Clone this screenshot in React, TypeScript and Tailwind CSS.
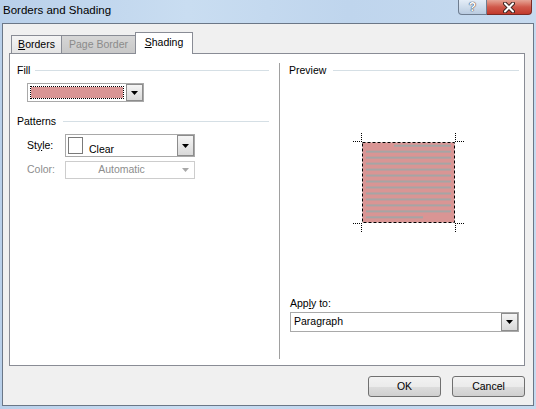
import React from "react";

function Arrow({ color = "#000" }: { color?: string }) {
  return (
    <svg width="7" height="4" viewBox="0 0 7 4">
      <path d="M0 0h7L3.5 4z" fill={color} />
    </svg>
  );
}

function DropButton({ className = "" }: { className?: string }) {
  return (
    <div className={"flex items-center justify-center border border-[#8c8c8c] bg-gradient-to-b from-[#f5f5f5] to-[#d9d9d9] " + className}>
      <Arrow />
    </div>
  );
}

function GroupHeader({ label, gap }: { label: string; gap: string }) {
  return (
    <div className="flex h-[14px] items-center">
      <span className="leading-none">{label}</span>
      <div className={"h-px flex-1 bg-[#d5dfe5] " + gap} />
    </div>
  );
}

function Preview() {
  const lines = Array.from({ length: 13 }, (_, i) => i);
  return (
    <svg width="116" height="106" viewBox="0 0 116 106" className="ml-[61px] mt-[53px]">
      <rect x="12.5" y="12.5" width="92" height="80" fill="#d99594" />
      {lines.map((i) => {
        const x1 = i === 0 ? 44 : 16;
        const x2 = i === 12 ? 73 : 101;
        return <rect key={i} x={x1} y={14.7 + i * 5.97} width={x2 - x1} height="2" fill="#a5a5a5" />;
      })}
      <rect x="12.5" y="12.5" width="92" height="80" fill="none" stroke="#000" strokeDasharray="3 2" />
      <g stroke="#000" strokeDasharray="1 1" fill="none">
        <path d="M11.5 3v9M3 11.5h9" />
        <path d="M105.5 3v9M105 11.5h9" />
        <path d="M11.5 93v9M3 93.5h9" />
        <path d="M105.5 93v9M105 93.5h9" />
      </g>
    </svg>
  );
}

export default function App() {
  return (
    <div className="flex h-[409px] w-[536px] flex-col bg-[linear-gradient(90deg,#b9d0ea_0%,#c9ddf1_35%,#bfd5ed_65%,#c6daef_100%)] px-[2px] pb-[3px] font-['Liberation_Sans',Arial,sans-serif] text-[10.5px] text-black">
      {/* title bar */}
      <div className="flex h-[23px] items-start">
        <div className="ml-px mt-[3px] flex-1 text-[11.5px] leading-[14px] text-black">Borders and Shading</div>
        <div className="mr-[2px] flex h-[15px]">
          <div className="flex w-[29px] items-center justify-center rounded-bl-[4px] border border-t-0 border-[#6e7d90] bg-gradient-to-b from-[#e4edf7] to-[#b9cbe0]">
            <span className="text-[12px] font-bold leading-none text-white [text-shadow:0_0_1px_#223,0_0_1px_#223]">?</span>
          </div>
          <div className="flex w-[45px] items-center justify-center rounded-br-[4px] border border-l-0 border-t-0 border-[#7b2a24] bg-gradient-to-b from-[#e5a496] via-[#d0594b] to-[#c1392c]">
            <svg width="12" height="11" viewBox="0 0 12 11">
              <path d="M2 1.5l8 8M10 1.5l-8 8" stroke="#3b2420" strokeWidth="4" strokeLinecap="round" />
              <path d="M2 1.5l8 8M10 1.5l-8 8" stroke="#fff" strokeWidth="2" strokeLinecap="round" />
            </svg>
          </div>
        </div>
      </div>

      {/* client area */}
      <div className="flex flex-1 flex-col border border-[#6b7787] bg-[#f0f0f0] pl-[6px] pr-[8px] pt-[8px]">
        {/* tabs */}
        <div className="relative z-10 flex h-[21px] items-end pl-[2px]">
          <div className="flex h-[18px] w-[51px] items-center justify-center border border-b-0 border-[#898c95] bg-gradient-to-b from-[#f4f4f4] to-[#e4e4e4]">
            <span><span className="underline">B</span>orders</span>
          </div>
          <div className="-ml-px flex h-[18px] w-[75px] items-center justify-center border border-b-0 border-[#898c95] bg-gradient-to-b from-[#d6d6d6] to-[#c8c8c8] text-[#8b8b8b]">
            Page Border
          </div>
          <div className="-mb-px -ml-px flex h-[22px] w-[58px] items-center justify-center border border-b-0 border-[#898c95] bg-white pb-[1px]">
            <span><span className="underline">S</span>hading</span>
          </div>
        </div>

        {/* panel */}
        <div className="flex h-[313px] border border-[#898c95] bg-white">
          {/* left column */}
          <div className="flex w-[269px] flex-col pl-[7px] pr-[10px] pt-[9px]">
            <GroupHeader label="Fill" gap="ml-[5px]" />
            <div className="ml-[10px] mt-[6px] flex h-[19px] w-[117px] border border-[#a9a9a9]">
              <div className="m-[2px] flex flex-1 border border-dotted border-black">
                <div className="flex-1 bg-[#d99594]" />
              </div>
              <DropButton className="w-[17px]" />
            </div>

            <div className="mt-[12px]">
              <GroupHeader label="Patterns" gap="ml-[7px]" />
            </div>

            <div className="ml-[10px] mt-[6px] flex items-center">
              <span className="w-[38px]">
                St<span className="underline">y</span>le:
              </span>
              <div className="flex h-[23px] w-[130px] border border-[#a9a9a9]">
                <div className="flex flex-1 items-start p-[2px]">
                  <div className="h-[17px] w-[15px] border border-[#7a7a7a] bg-white" />
                  <span className="ml-[6px] mt-[5px] leading-[14px]">Clear</span>
                </div>
                <DropButton className="w-[17px]" />
              </div>
            </div>

            <div className="ml-[10px] mt-[4px] flex items-center">
              <span className="w-[38px] text-[#8d8d8d]">Color:</span>
              <div className="flex h-[18px] w-[130px] border border-[#cdcdcd] bg-white">
                <div className="flex flex-1 items-center justify-center text-[#8d8d8d]">Automatic</div>
                <div className="flex w-[17px] items-center justify-center">
                  <Arrow color="#a8a8a8" />
                </div>
              </div>
            </div>
          </div>

          {/* divider */}
          <div className="mb-[6px] mt-[9px] w-px bg-[#a0a0a0]" />

          {/* right column */}
          <div className="flex flex-1 flex-col pb-[33px] pl-[9px] pr-[5px] pt-[9px]">
            <GroupHeader label="Preview" gap="ml-[7px]" />
            <Preview />
            <div className="mt-auto flex flex-col">
              <span className="ml-px h-[14px] leading-[14px]">
                App<span className="underline">l</span>y to:
              </span>
              <div className="ml-px mt-[2px] flex h-[20px] border border-[#a9a9a9]">
                <div className="flex flex-1 items-center pl-[3px]">Paragraph</div>
                <DropButton className="w-[17px]" />
              </div>
            </div>
          </div>
        </div>

        {/* buttons */}
        <div className="mt-[10px] flex justify-end gap-[11px]">
          <button className="h-[21px] w-[73px] rounded-[3px] border border-[#707070] bg-[linear-gradient(180deg,#f2f2f2_0%,#ebebeb_50%,#dddddd_50%,#cfcfcf_100%)] text-[10.5px] leading-none">
            OK
          </button>
          <button className="h-[21px] w-[73px] rounded-[3px] border border-[#707070] bg-[linear-gradient(180deg,#f2f2f2_0%,#ebebeb_50%,#dddddd_50%,#cfcfcf_100%)] text-[10.5px] leading-none">
            Cancel
          </button>
        </div>
      </div>
    </div>
  );
}
